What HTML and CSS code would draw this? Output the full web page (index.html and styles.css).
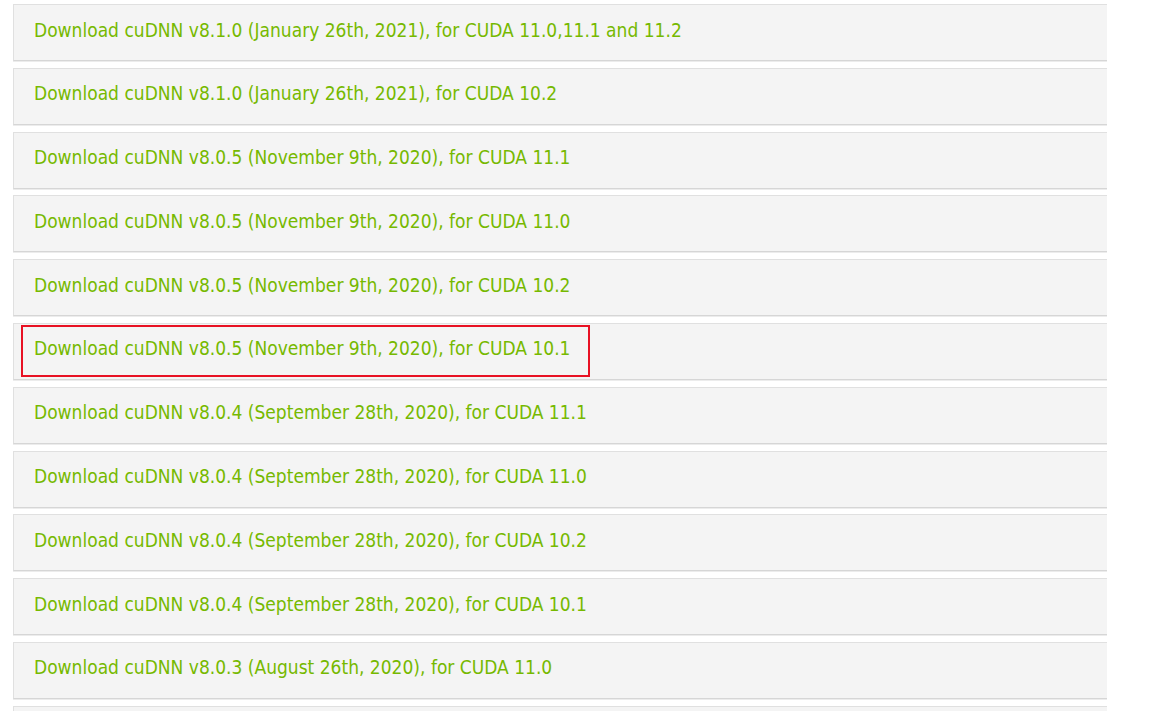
FILE: index.html
```html
<!DOCTYPE html>
<html lang="en">
<head>
<meta charset="utf-8">
<title>cuDNN Archive</title>
<link rel="stylesheet" href="styles.css">
</head>
<body>
<div class="list">
  <div class="row"><a class="dl" href="#">Download cuDNN v8.1.0 (January 26th, 2021), for CUDA 11.0,11.1 and 11.2</a></div>
  <div class="row"><a class="dl" href="#">Download cuDNN v8.1.0 (January 26th, 2021), for CUDA 10.2</a></div>
  <div class="row"><a class="dl" href="#">Download cuDNN v8.0.5 (November 9th, 2020), for CUDA 11.1</a></div>
  <div class="row"><a class="dl" href="#">Download cuDNN v8.0.5 (November 9th, 2020), for CUDA 11.0</a></div>
  <div class="row"><a class="dl" href="#">Download cuDNN v8.0.5 (November 9th, 2020), for CUDA 10.2</a></div>
  <div class="row"><a class="dl dl-marked" href="#">Download cuDNN v8.0.5 (November 9th, 2020), for CUDA 10.1</a></div>
  <div class="row"><a class="dl" href="#">Download cuDNN v8.0.4 (September 28th, 2020), for CUDA 11.1</a></div>
  <div class="row"><a class="dl" href="#">Download cuDNN v8.0.4 (September 28th, 2020), for CUDA 11.0</a></div>
  <div class="row"><a class="dl" href="#">Download cuDNN v8.0.4 (September 28th, 2020), for CUDA 10.2</a></div>
  <div class="row"><a class="dl" href="#">Download cuDNN v8.0.4 (September 28th, 2020), for CUDA 10.1</a></div>
  <div class="row"><a class="dl" href="#">Download cuDNN v8.0.3 (August 26th, 2020), for CUDA 11.0</a></div>
  <div class="row"></div>
</div>
</body>
</html>
```
FILE: styles.css
```css
html, body {
  margin: 0;
  padding: 0;
  background: #ffffff;
  overflow: hidden;
}
body {
  font-family: "DejaVu Sans Condensed", Roboto, "Liberation Sans", sans-serif;
}
.list {
  display: flex;
  flex-direction: column;
  gap: 6.8px;
  padding: 4px 0 0 13px;
  width: 1094px;
}
.row {
  box-sizing: border-box;
  flex: none;
  height: 57px;
  background: #f4f4f4;
  border: 1px solid #e0e0e0;
  border-right: none;
  border-bottom-color: #d6d6d6;
  box-shadow: 0 1px 0 #ececec;
  display: flex;
  align-items: center;
  padding-left: 7px;
}
.dl {
  display: inline-block;
  box-sizing: border-box;
  height: 52px;
  line-height: 42px;
  padding: 0 18px 6px 11px;
  border: 2px solid transparent;
  color: #76b900;
  text-decoration: none;
  font-size: 19px;
  white-space: nowrap;
}
.dl-marked {
  border-color: #e81123;
}
```
